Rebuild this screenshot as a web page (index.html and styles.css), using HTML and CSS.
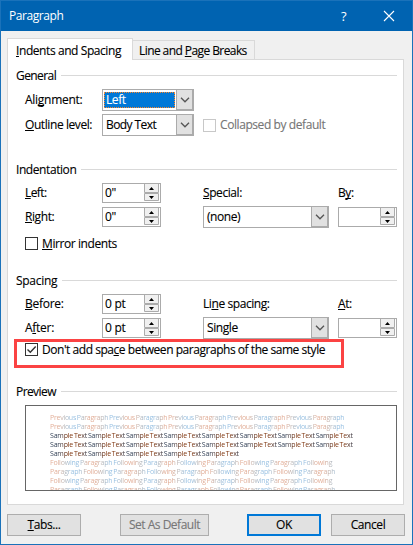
FILE: index.html
```html
<!DOCTYPE html>
<html lang="en">
<head>
<meta charset="utf-8">
<title>Paragraph</title>
<link rel="stylesheet" href="styles.css">
</head>
<body>
<div class="dialog">
  <header class="titlebar">
    <span class="title">Paragraph</span>
    <span class="help">?</span>
    <svg class="close" width="12" height="12" viewBox="0 0 12 12"><path d="M1 1l10 10M11 1L1 11"/></svg>
  </header>
  <nav class="tabs">
    <div class="tab active"><u>I</u>ndents and Spacing</div>
    <div class="tab tight">Line and <u>P</u>age Breaks</div>
  </nav>
  <main class="panel">
    <section class="group general">
      <h2><span class="tight">General</span></h2>
      <div class="row first">
        <label class="loose">Ali<u>g</u>nment:</label>
        <div class="select short"><span class="value picked">Left</span><span class="drop"><svg width="10" height="6" viewBox="0 0 10 6"><path d="M1 .8l4 4 4-4"/></svg></span></div>
      </div>
      <div class="row second">
        <label><u>O</u>utline level:</label>
        <div class="select short"><span class="value tight">Body Text</span><span class="drop"><svg width="10" height="6" viewBox="0 0 10 6"><path d="M1 .8l4 4 4-4"/></svg></span></div>
        <div class="check disabled"><i class="box"></i><span>Collapsed by default</span></div>
      </div>
    </section>
    <section class="group indentation">
      <h2><span>Indentation</span></h2>
      <div class="fields">
        <label class="tight"><u>L</u>eft:</label>
        <div class="spin"><span>0"</span><svg class="updown" width="15" height="18" viewBox="0 0 15 18"><path class="face" d="M.5 0v8.500h14V0M.5 9.500h14v7H.5z"/><path class="arrow" d="M5 6h5L7.500 3zM5 12h5L7.500 15z"/></svg></div>
        <label class="wide"><u>S</u>pecial:</label>
        <label class="last">B<u>y</u>:</label>
        <label><u>R</u>ight:</label>
        <div class="spin"><span>0"</span><svg class="updown" width="15" height="18" viewBox="0 0 15 18"><path class="face" d="M.5 0v8.500h14V0M.5 9.500h14v7H.5z"/><path class="arrow" d="M5 6h5L7.500 3zM5 12h5L7.500 15z"/></svg></div>
        <div class="select wide"><span class="value">(none)</span><span class="drop"><svg width="10" height="6" viewBox="0 0 10 6"><path d="M1 .8l4 4 4-4"/></svg></span></div>
        <div class="spin last"><span></span><svg class="updown" width="15" height="18" viewBox="0 0 15 18"><path class="face" d="M.5 0v8.500h14V0M.5 9.500h14v7H.5z"/><path class="arrow" d="M5 6h5L7.500 3zM5 12h5L7.500 15z"/></svg></div>
      </div>
      <div class="check"><i class="box"></i><span><u>M</u>irror indents</span></div>
    </section>
    <section class="group spacing">
      <h2><span class="loose">Spacing</span></h2>
      <div class="fields">
        <label class="loose"><u>B</u>efore:</label>
        <div class="spin"><span class="loose">0 pt</span><svg class="updown" width="15" height="18" viewBox="0 0 15 18"><path class="face" d="M.5 0v8.500h14V0M.5 9.500h14v7H.5z"/><path class="arrow" d="M5 6h5L7.500 3zM5 12h5L7.500 15z"/></svg></div>
        <label class="wide">Li<u>n</u>e spacing:</label>
        <label class="last"><u>A</u>t:</label>
        <label class="loose">A<u>f</u>ter:</label>
        <div class="spin"><span class="loose">0 pt</span><svg class="updown" width="15" height="18" viewBox="0 0 15 18"><path class="face" d="M.5 0v8.500h14V0M.5 9.500h14v7H.5z"/><path class="arrow" d="M5 6h5L7.500 3zM5 12h5L7.500 15z"/></svg></div>
        <div class="select wide"><span class="value">Single</span><span class="drop"><svg width="10" height="6" viewBox="0 0 10 6"><path d="M1 .8l4 4 4-4"/></svg></span></div>
        <div class="spin last"><span></span><svg class="updown" width="15" height="18" viewBox="0 0 15 18"><path class="face" d="M.5 0v8.500h14V0M.5 9.500h14v7H.5z"/><path class="arrow" d="M5 6h5L7.500 3zM5 12h5L7.500 15z"/></svg></div>
      </div>
      <div class="check highlight"><i class="box"><svg width="11" height="11" viewBox="0 0 11 11"><path d="M1.500 5.500l2.800 2.800L9.700 2.500"/></svg></i><span>Don't add spa<u>c</u>e between paragraphs of the same style</span></div>
    </section>
    <section class="group preview">
      <h2><span class="tight">Preview</span></h2>
      <div class="page">
        <p class="prev">Previous Paragraph Previous Paragraph Previous Paragraph Previous Paragraph Previous Paragraph</p>
        <p class="prev">Previous Paragraph Previous Paragraph Previous Paragraph Previous Paragraph Previous Paragraph</p>
        <p class="sample">Sample Text Sample Text Sample Text Sample Text Sample Text Sample Text Sample Text Sample Text</p>
        <p class="sample">Sample Text Sample Text Sample Text Sample Text Sample Text Sample Text Sample Text Sample Text</p>
        <p class="sample">Sample Text Sample Text Sample Text Sample Text Sample Text</p>
        <p class="next">Following Paragraph Following Paragraph Following Paragraph Following Paragraph Following</p>
        <p class="next">Paragraph Following Paragraph Following Paragraph Following Paragraph Following Paragraph</p>
        <p class="next">Following Paragraph Following Paragraph Following Paragraph Following Paragraph Following</p>
        <p class="next">Paragraph Following Paragraph Following Paragraph Following Paragraph Following Paragraph</p>
      </div>
    </section>
  </main>
  <footer class="actions">
    <button class="tabs-btn"><u>T</u>abs...</button>
    <button class="default-btn" disabled>Set As Default</button>
    <button class="ok">OK</button>
    <button class="cancel">Cancel</button>
  </footer>
</div>
</body>
</html>
```
FILE: styles.css
```css
* { box-sizing: border-box; }
body { margin: 0; font: 12px/16px "Open Sans", "Noto Sans", sans-serif; color: #000; letter-spacing: -.42px; -webkit-text-stroke: .12px; }
.tight { letter-spacing: -.58px; }
.loose { letter-spacing: -.28px; }
u { text-decoration: underline; text-decoration-thickness: 1px; text-underline-offset: 1px; text-decoration-skip-ink: none; }
.dialog { width: 413px; height: 545px; background: #f0f0f0; border: 1px solid #1a72ba; display: flex; flex-direction: column; overflow: hidden; white-space: nowrap; }
.titlebar { height: 30px; flex: none; background: #0063b1; color: #fff; display: flex; align-items: center; padding: 0 17px 0 8px; -webkit-text-stroke: 0; }
.title { flex: 1; }
.help { width: 42px; font-size: 13px; }
.close { fill: none; stroke: #fff; stroke-width: 1.1; }

.tabs { height: 29px; flex: none; display: flex; align-items: flex-end; padding: 0 6px; position: relative; z-index: 1; margin-bottom: -1px; }
.tab { height: 19px; width: 122px; border: 1px solid #d9d9d9; border-left: 0; border-bottom: 0; padding: 2px 0 0 6px; margin-bottom: 1px; }
.tab.active { width: 126px; height: 22px; border-left: 1px solid #d9d9d9; background: #fff; padding: 4px 0 0 8px; margin-bottom: 0; }
.panel { height: 446px; flex: none; margin: 0 7px 0 6px; border: 1px solid #d9d9d9; background: #fff; width: 397px; padding: 8px 6px 0 8px; }

.group h2 { font: inherit; margin: 0; height: 16px; display: flex; align-items: center; gap: 5px; }
.group h2::after { content: ""; flex: 1; height: 1px; background: #d9d9d9; margin-bottom: 2px; }
.general { height: 94px; }
.indentation { height: 111px; }
.spacing { height: 111px; }
.row { display: flex; align-items: center; padding-left: 9px; height: 22px; }
.row label { width: 77px; }
.row.first { margin-top: 5px; }
.row.second { margin-top: 3px; }

.select { height: 22px; border: 1px solid #ababab; background: #fff; display: flex; }
.select.short { width: 92px; margin-right: 9px; flex: none; }
.value { flex: 1; margin: 2px 0 2px 1px; padding-left: 2px; line-height: 16px; }
.value.picked { background: #0078d7; color: #fff; outline: 1px dotted #ff8728; outline-offset: -1px; margin-right: 1px; }
.drop { width: 17px; background: #e1e1e1; border: 1px solid #ababab; border-width: 0 1px 1px; display: flex; align-items: center; justify-content: center; }
.drop path { fill: none; stroke: #555; stroke-width: 1.3; }

.fields { display: grid; grid-template-columns: 77px 59px 125px 59px; grid-template-rows: 20px 20px; row-gap: 4px; padding: 5px 0 0 9px; align-items: center; }
.fields .wide { margin-left: 42px; width: 126px; }
.fields .last { margin-left: 52px; width: 59px; }
.spin { height: 20px; width: 59px; border: 1px solid #ababab; display: flex; padding: 0 1px 0 2px; }
.spin span { flex: 1; line-height: 18px; }
.updown { flex: none; }
.face { fill: #f0f0f0; stroke: #ababab; }
.arrow { fill: #000; }

.check { display: flex; align-items: center; gap: 4px; height: 15px; }
.box { width: 13px; height: 13px; border: 1px solid #333; background: #fff; display: flex; flex: none; }
.box path { fill: none; stroke: #333; stroke-width: 1.4; }
.disabled { color: #767676; }
.disabled .box { border-color: #c8c8c8; }
.indentation .check { margin: 9px 0 0 9px; }
.highlight { margin: 1px 0 0 -2px; width: 330px; height: 29px; border: 3px solid #fb4343; align-items: flex-start; padding: 1px 0 0 8px; position: relative; letter-spacing: -.46px; }
.highlight span { margin-top: -1px; }

.page { margin: 5px 0 0 9px; width: 372px; height: 86px; border: 1px solid #666; overflow: hidden; padding: 7px 0 0 24px; }
.page p { margin: 0; font-size: 7px; line-height: 9px; height: 9px; width: 320px; color: transparent; -webkit-text-stroke: 0; -webkit-background-clip: text; background-clip: text; word-spacing: -.8px; }
.prev, .next { background-image: repeating-linear-gradient(90deg, #e0a890 0 8px, #b8b4b4 14px, #90bce0 22px 28px, #b8b4b4 34px, #e0a890 38px); }
.prev { letter-spacing: -.27px; }
.page .sample { letter-spacing: -.185px; font-weight: 500; background-image: repeating-linear-gradient(90deg, #2c3a50 0 8px, #7c3008 18px 28px, #2c3a50 38px); }
.next { letter-spacing: -.18px; }

.actions { display: flex; margin: 9px 0 0 6px; }
button { font: inherit; letter-spacing: inherit; color: #000; height: 22px; border: 1px solid #adadad; background: #e1e1e1; padding: 0; }
button:disabled { color: #777; }
.tabs-btn { width: 74px; margin-right: 39px; }
.default-btn { width: 89px; margin-right: 38px; letter-spacing: -.5px; }
.ok { width: 74px; border: 2px solid #0078d7; margin-right: 10px; }
.cancel { width: 74px; }
```
